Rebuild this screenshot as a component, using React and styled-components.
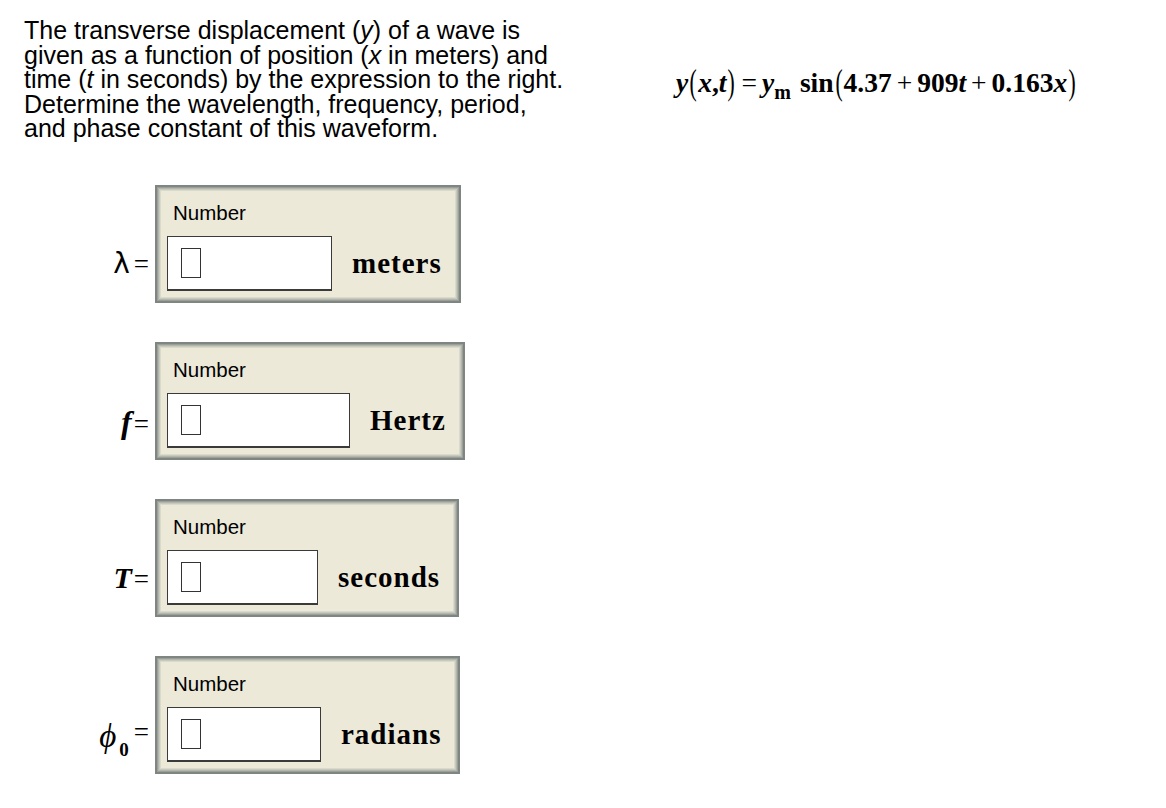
import styled, { createGlobalStyle } from "styled-components";

const GlobalStyle = createGlobalStyle`
    html, body{
        margin: 0;
        padding: 0;
        background: #FFF;
    }
    body{
        font-family: "Liberation Sans", Arial, sans-serif;
        color: #000;
    }
`;

const fields = [
    { id: "lambda", width: 165, unit: "meters" },
    { id: "freq", width: 183, unit: "Hertz" },
    { id: "period", width: 151, unit: "seconds" },
    { id: "phase", width: 154, unit: "radians" },
];

function Symbol({ id }){
    if (id === "lambda") return <Sym><Lambda>λ</Lambda><Eq>=</Eq></Sym>;
    if (id === "freq") return <Sym><BoldItalic $size={32}>f</BoldItalic><Eq>=</Eq></Sym>;
    if (id === "period") return <Sym><BoldItalic $size={30}>T</BoldItalic><Eq>=</Eq></Sym>;
    return <Sym><Phi>ϕ</Phi><Sub>0</Sub><Eq $up>=</Eq></Sym>;
}

export default function App(){
    return(
        <Page>
            <GlobalStyle />
            <Top>
                <Question>
                    The transverse displacement (<i>y</i>) of a wave is<br />
                    given as a function of position (<i>x</i> in meters) and<br />
                    time (<i>t</i> in seconds) by the expression to the right.<br />
                    Determine the wavelength, frequency, period,<br />
                    and phase constant of this waveform.
                </Question>
                <Formula>
                    <Var>y</Var><Paren>(</Paren><Var>x</Var>,<Var>t</Var><Paren>)</Paren>
                    <Op>=</Op>
                    <Var>y</Var><SubM>m</SubM>
                    <Fn>sin</Fn>
                    <Paren>(</Paren>4.37<Op>+</Op>909<Var>t</Var><Op>+</Op>0.163<Var>x</Var><Paren>)</Paren>
                </Formula>
            </Top>
            <Fields>
                {fields.map(f => (
                    <Row key={f.id}>
                        <LabelCell><Symbol id={f.id} /></LabelCell>
                        <Panel>
                            <Caption>Number</Caption>
                            <Line>
                                <InputBox $w={f.width}>
                                    <Caret />
                                </InputBox>
                                <Unit>{f.unit}</Unit>
                            </Line>
                        </Panel>
                    </Row>
                ))}
            </Fields>
        </Page>
    );
}

const Page = styled.div`
    width: 1166px;
    height: 808px;
    padding: 18px 0 0 24px;
    box-sizing: border-box;
`;

const Top = styled.div`
    display: flex;
    align-items: flex-start;
`;

const Question = styled.p`
    margin: 0;
    width: 610px;
    font-size: 25px;
    line-height: 24.5px;
`;

const Formula = styled.div`
    margin: 41px 0 0 42px;
    font: bold 27.5px "Liberation Serif", "Times New Roman", serif;
    display: flex;
    align-items: baseline;
    white-space: nowrap;
`;

const Var = styled.span`
    font-style: italic;
`;

const Fn = styled.span`
    margin-left: 9px;
`;

const Paren = styled.span`
    font-weight: normal;
    font-size: 36px;
    transform: scaleX(0.6) translateY(2px);
    display: inline-block;
    margin: 0 -1px;
`;

const Op = styled.span`
    font-weight: normal;
    margin: 0 5px;
`;

const SubM = styled.span`
    font-size: 20px;
    position: relative;
    top: 7px;
`;

const Fields = styled.div`
    margin-top: 44px;
    display: flex;
    flex-direction: column;
    gap: 39px;
`;

const Row = styled.div`
    display: flex;
    align-items: flex-start;
`;

const LabelCell = styled.div`
    width: 131px;
    padding-top: 62px;
    display: flex;
    justify-content: flex-end;
    padding-right: 6px;
    box-sizing: border-box;
`;

const Sym = styled.span`
    display: inline-flex;
    align-items: baseline;
    font: 27px "Liberation Serif", "Times New Roman", serif;
`;

const Lambda = styled.span`
    font-family: "DejaVu Sans", sans-serif;
    font-size: 28px;
    margin-right: 4px;
`;

const BoldItalic = styled.span`
    font-weight: bold;
    font-style: italic;
    font-size: ${p => p.$size}px;
    margin-right: 2px;
`;

const Phi = styled.span`
    font-style: italic;
    font-size: 33px;
`;

const Sub = styled.span`
    font-weight: bold;
    font-size: 19px;
    position: relative;
    top: 9px;
    margin: 0 5px 0 3px;
`;

const Eq = styled.span`
    position: relative;
    top: ${p => p.$up ? "-6px" : "0"};
`;

const Panel = styled.div`
    background: #ECE9D8;
    border: 2px solid #7F8580;
    box-shadow: inset 0 0 0 1px #9A9F98, inset 0 0 0 2px #B2B6AE, inset 0 0 0 3px #C7C9BD, inset 0 0 0 4px #DADACB;
    padding: 10px 17px 10px 10px;
    display: flex;
    flex-direction: column;
`;

const Caption = styled.div`
    font-size: 20.5px;
    line-height: 24px;
    padding-left: 6px;
    margin: 4px 0 11px;
`;

const Line = styled.div`
    display: flex;
    align-items: center;
`;

const InputBox = styled.div`
    width: ${p => p.$w}px;
    height: 55px;
    box-sizing: border-box;
    background: #FFF;
    border: 1px solid #3A3A3A;
    border-bottom-width: 2px;
    display: flex;
    align-items: center;
    padding-left: 13px;
`;

const Caret = styled.div`
    width: 20px;
    height: 30px;
    box-sizing: border-box;
    border: 1px solid #333;
`;

const Unit = styled.span`
    margin-left: 20px;
    font: bold 29px "Liberation Serif", "Times New Roman", serif;
    letter-spacing: 1px;
`;
